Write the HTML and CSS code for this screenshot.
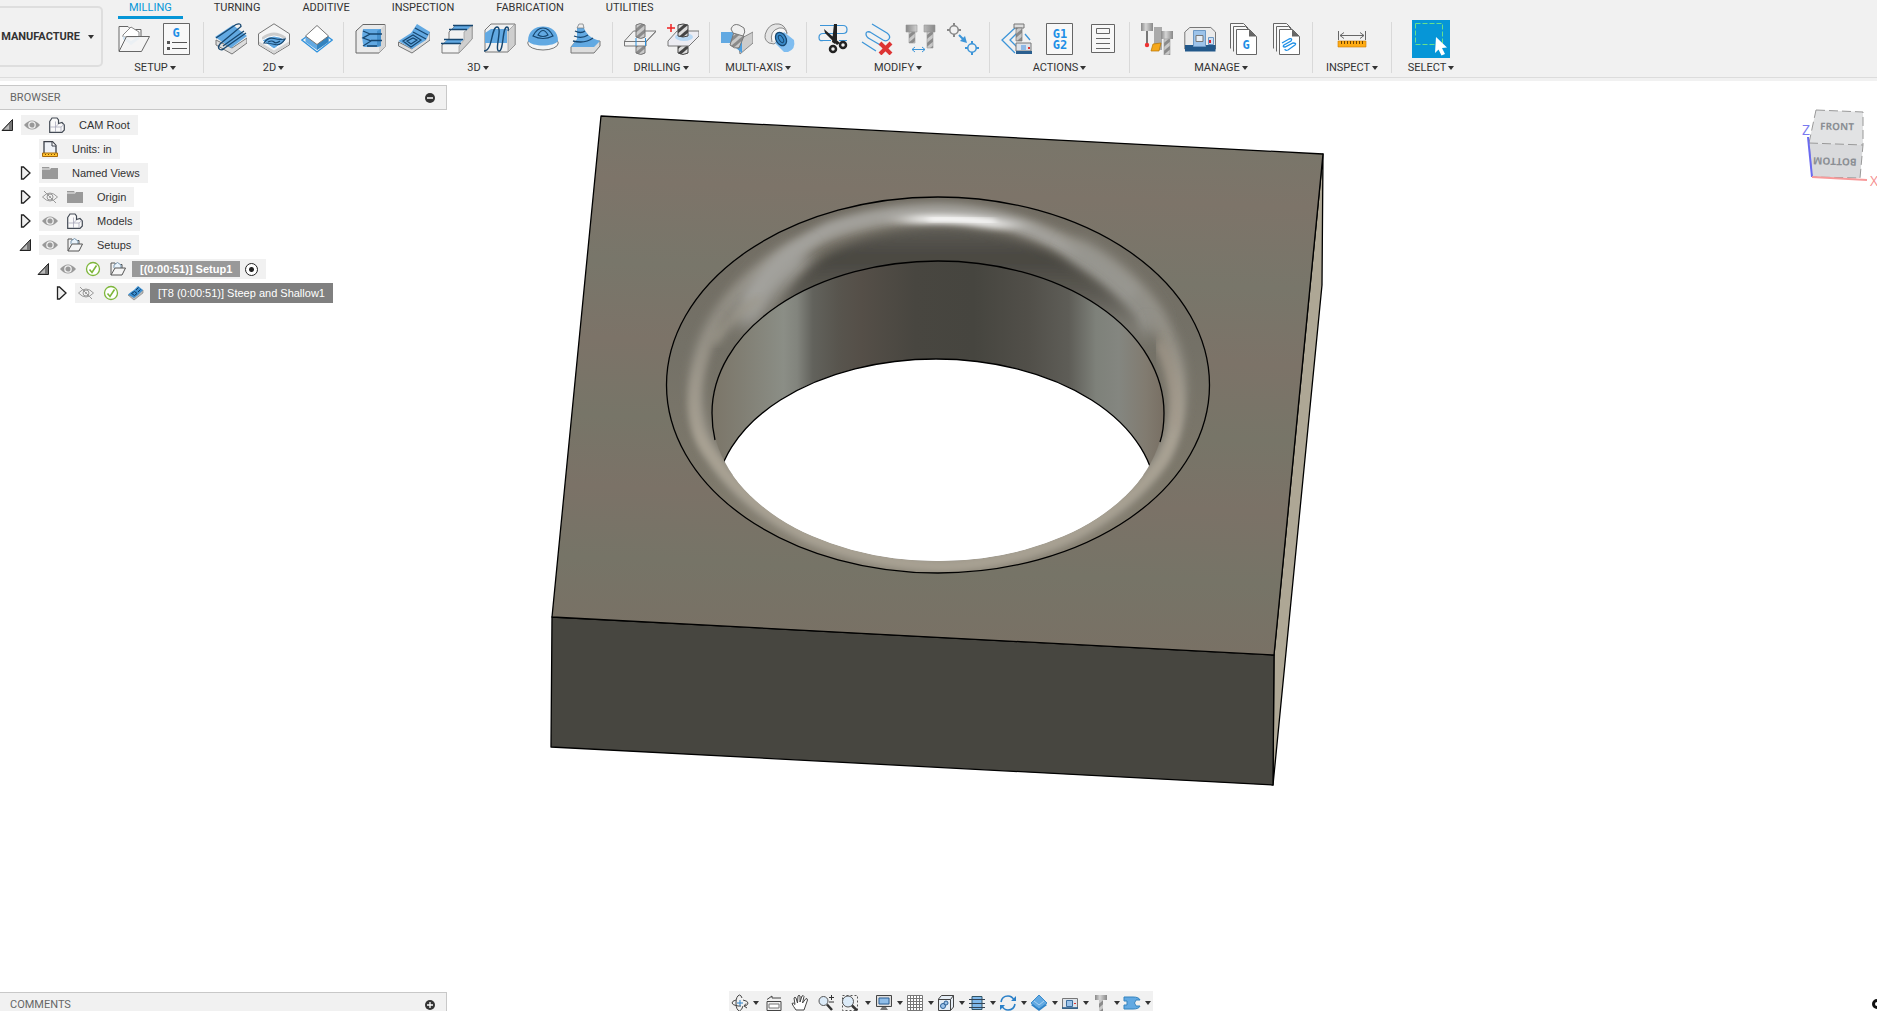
FILE: index.html
```html
<!DOCTYPE html>
<html lang="en">
<head>
    <meta charset="UTF-8">
    <meta name="viewport" content="width=device-width, initial-scale=1.0">
    <title>Manufacture</title>
    <link rel="stylesheet" href="styles.css">
</head>
<body>
    <!-- shared icons -->
    <svg class="defs" aria-hidden="true">
        <symbol id="eye" viewBox="0 0 16 16">
            <path d="M0 8Q8-1 16 8Q8 17 0 8Z" fill="#999"/>
            <circle cx="8" cy="8" r="3.2" fill="none" stroke="#eee" stroke-width="1.3"/>
        </symbol>
        <symbol id="eye-off" viewBox="0 0 16 16">
            <path d="M.5 8Q8 0 15.500 8Q8 16 .5 8ZM2 2l12 12" fill="none" stroke="#999"/>
            <circle cx="8" cy="8" r="3" fill="none" stroke="#999"/>
            <circle cx="8" cy="8" r="1" fill="#999"/>
        </symbol>
        <symbol id="check" viewBox="0 0 16 16">
            <circle cx="8" cy="8" r="6.500" fill="#fff" stroke="#7db63a" stroke-width="1.300"/>
            <path d="M4.500 8.500l2.500 3 4.500-7" fill="none" stroke="#7db63a" stroke-width="1.600"/>
        </symbol>
        <symbol id="body" viewBox="0 0 16 16">
            <path d="M.7 4.500L3 1h5l1.500 2v3.500L13 5.500l2.300 2.500v5L13 15.300H.7Z" fill="#fafafa" stroke="#444b55" stroke-width="1.200"/>
            <path d="M6.500 4.500V15M1 10h5.500l3-3M6.500 10H12v5M12 10l3-2.500" fill="none" stroke="#aab" stroke-width=".8"/>
        </symbol>
        <symbol id="folder" viewBox="0 0 16 16">
            <path d="M0 2h7l1 1.500H0zM0 4.500h8L9 3h7v11H0z" fill="#999"/>
        </symbol>
        <symbol id="folder-open" viewBox="0 0 16 16">
            <path d="M1 14V2h4l1 1.500h6V7" fill="none" stroke="#555"/>
            <path d="M4 7V4l3.500-2.500L11 4v3" fill="#eaf4fc" stroke="#7b98b0"/>
            <path d="M1 14L5 7h10.500l-3.500 7z" fill="#f5f5f5" stroke="#555"/>
        </symbol>
        <symbol id="units" viewBox="0 0 16 16">
            <path d="M2 12V.7h8.500L14 4.500V12" fill="#eef1f6" stroke="#3b3f48" stroke-width="1.300"/>
            <path d="M10 1v4h4" fill="#fff" stroke="#3b3f48"/>
            <path d="M.5 12h15v3.500H.5z" fill="#ffc22e" stroke="#a8690a"/>
            <path d="M3.500 13v1M6.500 13v1M9.500 13v1M12.500 13v1" stroke="#7a4c05"/>
        </symbol>
        <symbol id="toolpath" viewBox="0 0 16 16">
            <path d="M0 10l6 5 9-7V5L6 11z" fill="#bbb" stroke="#777" stroke-width=".6"/>
            <path d="M0 9.500L3 7l3-2 4-4 5 4-5 5-4 3z" fill="#3d8fd0"/>
            <path d="M3.500 8.500l3-2 2.500 2-2.500 2zM8 5l2.500-2.500M10 7l2.500-2.500" fill="none" stroke="#0b3a66"/>
        </symbol>
        <symbol id="tri-open" viewBox="0 0 12 12">
            <path d="M1 11.500L11.500.5v11z" fill="#777" stroke="#222"/>
            <path d="M3 10.500l5-5v5z" fill="#bbb"/>
        </symbol>
        <symbol id="tri-closed" viewBox="0 0 12 14">
            <path d="M1.500 1h2L10 7l-6.500 6h-2z" fill="#eee" stroke="#222" stroke-width="1.300"/>
        </symbol>
        <linearGradient id="steel"><stop stop-color="#888"/><stop offset=".4" stop-color="#d5d5d5"/><stop offset="1" stop-color="#888"/></linearGradient>
        <pattern id="flutes" width="6" height="6" patternUnits="userSpaceOnUse" patternTransform="rotate(-40)">
            <path d="M0 0h6v6H0z" fill="#c9c9c9"/><path d="M0 0h6v3H0z" fill="#8a8a8a"/>
        </pattern>
        <pattern id="flutes-dark" width="6" height="6" patternUnits="userSpaceOnUse" patternTransform="rotate(-40)">
            <path d="M0 0h6v6H0z" fill="#ddd"/><path d="M0 0h6v3H0z" fill="#444"/>
        </pattern>
    </svg>

    <header class="ribbon">
        <button class="workspace">MANUFACTURE<span class="caret"></span></button>
        <div class="ribbon-main">
            <nav class="tabs">
                <button class="tab active">MILLING</button>
                <button class="tab">TURNING</button>
                <button class="tab">ADDITIVE</button>
                <button class="tab">INSPECTION</button>
                <button class="tab">FABRICATION</button>
                <button class="tab">UTILITIES</button>
            </nav>
            <div class="groups">
                <section class="group">
                    <div class="tools">
                        <button class="tool" aria-label="New setup"><svg viewBox="0 0 32 32">
                            <path d="M1 28V3.500h9l3 3h10V13" fill="#f8f8f8" stroke="#666"/>
                            <path d="M5 12l8-8 8 5v5H5z" fill="#fff" stroke="#888"/>
                            <path d="M5 13v3l8 6 8-6v-3l-8 5z" fill="#cfe4f4"/>
                            <path d="M1 28.500L8.500 13.500h23l-8 15z" fill="#f4f4f4" fill-opacity=".75" stroke="#666"/>
                        </svg></button>
                        <button class="tool" aria-label="NC program"><svg viewBox="0 0 32 32">
                            <path d="M2.500.5h26v31h-26z" fill="#f8f8f8" stroke="#666"/>
                            <text x="15" y="14" class="g-text" text-anchor="middle">G</text>
                            <path d="M6 18h3v3H6zM6 24h3v3H6z" fill="#555"/><path d="M11 19.500h15M11 25.500h15" stroke="#555"/>
                        </svg></button>
                    </div>
                    <button class="group-label">SETUP<span class="caret"></span></button>
                </section>
                <section class="group">
                    <div class="tools">
                        <button class="tool" aria-label="2D adaptive"><svg viewBox="0 0 32 32">
                            <path d="M1 17v5l16 9 15-11v-5L17 25z" fill="#ddd" stroke="#777"/>
                            <path d="M0 14L18 2l14 11-16 12z" fill="#62a9e2"/>
                            <path d="M1 15L21 1.500q5-2 5 2L5 21q-3 4 0 5.500 2 1 4-1L31 10" fill="none" stroke="#16466f" stroke-width="1.300"/>
                            <path d="M8 23L29 8" fill="none" stroke="#16466f" stroke-width="1.300"/>
                        </svg></button>
                        <button class="tool" aria-label="2D pocket"><svg viewBox="0 0 32 32">
                            <path d="M16 .8l15.500 10v11L16 31.200.5 21.800v-11z" fill="#f5f5f5" stroke="#777"/>
                            <path d="M4 14Q16 5 28 14v3L16 26 4 16z" fill="#ccc"/>
                            <path d="M4 17.500q12-9 24 0L16 26z" fill="#62a9e2" stroke="#fff"/>
                            <path d="M1 18.500l15 9 15-9v3l-15 9-15-9z" fill="#d5d5d5"/>
                            <path d="M6 20q4-6 10-4.500t11 .5q-4 7-10 5.500t-11-1.500zM10 19q4-2 6 0t6-1" fill="none" stroke="#16466f" stroke-width="1.200"/>
                        </svg></button>
                        <button class="tool" aria-label="2D contour"><svg viewBox="0 0 32 32">
                            <path d="M.8 17L16 6l15.200 11L16 29z" fill="none" stroke="#2b90dd" stroke-width="1.200"/>
                            <path d="M4.500 13v6L16 27l11.500-8v-6z" fill="#62a9e2"/><path d="M16 21v6l11.500-8v-6z" fill="#3383bf"/>
                            <path d="M4.500 13L16 2.500 27.500 13 16 21.500z" fill="#fff" stroke="#777"/>
                        </svg></button>
                    </div>
                    <button class="group-label">2D<span class="caret"></span></button>
                </section>
                <section class="group">
                    <div class="tools">
                        <button class="tool" aria-label="Adaptive clearing"><svg viewBox="0 0 32 32">
                            <path d="M1 8l7-6.500h22v22L24 30H1z" fill="#eaeaea" stroke="#666"/>
                            <path d="M24 8l6-6.500v22L24 30z" fill="#d5d5d5"/>
                            <path d="M8 6h18v17l-5 1H9q-3-9-1-18z" fill="#62a9e2"/><path d="M22 8l4-2v17l-4 1z" fill="#4590cc"/>
                            <path d="M8 8l7 3-7 4 8 3-8 5M27 11H15M27 17.500H16M22 23H12" fill="none" stroke="#16466f" stroke-width="1.300"/>
                        </svg></button>
                        <button class="tool" aria-label="Pocket clearing"><svg viewBox="0 0 32 32">
                            <path d="M.5 19v4L14 30l18-13V9L14 26z" fill="#ddd" stroke="#777"/>
                            <path d="M.5 18L13 10l6-9 13 8-4 8-14 9z" fill="#62a9e2"/>
                            <path d="M5 18l10-6 8 5-10 7zM9 18l6-3 4 2-6 4zM15 9l13 7M17 5l13 7" fill="none" stroke="#16466f" stroke-width="1.200"/>
                        </svg></button>
                        <button class="tool" aria-label="Horizontal"><svg viewBox="0 0 32 32">
                            <path d="M1 22l7-6V9l6-6h17v13L18 30H1z" fill="#f2f2f2" stroke="#777"/>
                            <path d="M18 23l5-6V9l8-6v13L18 30z" fill="#cfcfcf" stroke="#999" stroke-width=".7"/>
                            <path d="M3 20l4-4h16l-4 4zM10 7l4-4h16l-4 4z" fill="#62a9e2"/>
                            <path d="M3 16.500h19M0 20.500h20M12 2.500h20M8 6.500h18" stroke="#16466f" stroke-width="1.300"/>
                        </svg></button>
                        <button class="tool" aria-label="Parallel"><svg viewBox="0 0 32 32">
                            <path d="M1 29V7l6-6h24v21l-7 7z" fill="#f0f0f0" stroke="#777"/>
                            <path d="M1 20V10l6-4h16v14z" fill="#62a9e2"/><path d="M24 8l7-7v21l-7 7z" fill="#cfcfcf" stroke="#888" stroke-width=".6"/>
                            <path d="M0 28c9 0 7-24 13-24s-3 24 2 24 3-24 8-24q2 0 1 4" fill="none" stroke="#16466f" stroke-width="1.400"/>
                        </svg></button>
                        <button class="tool" aria-label="Scallop"><svg viewBox="0 0 32 32">
                            <ellipse cx="16" cy="20" rx="15.300" ry="7" fill="#f5f5f5" stroke="#777"/>
                            <path d="M1 18C1 8 8 3.500 16 3.500S31 8 31 18C27 24 5 24 1 18z" fill="#62a9e2"/>
                            <path d="M6 13q4-8 10-8t10 8q-10 5-20 0zM11 12q5-9 10 0-5 3-10 0z" fill="none" stroke="#16466f" stroke-width="1.200"/>
                        </svg></button>
                        <button class="tool" aria-label="Steep and shallow"><svg viewBox="0 0 32 32">
                            <path d="M1 24l5-6h24v5l-6 7H1z" fill="#ddd" stroke="#777"/>
                            <path d="M1 24l6-8V5l2-4h4q2 13 17 17l-6 6z" fill="#62a9e2"/>
                            <path d="M7 5l2-4h4l1 4z" fill="#eee" stroke="#777" stroke-width=".7"/>
                            <path d="M5 8q6 3 10 0M4 13q8 3 14-1M3 18q12 3 20-3" fill="none" stroke="#16466f" stroke-width="1.300"/>
                        </svg></button>
                    </div>
                    <button class="group-label">3D<span class="caret"></span></button>
                </section>
                <section class="group">
                    <div class="tools">
                        <button class="tool" aria-label="Drill"><svg viewBox="0 0 32 32">
                            <path d="M12 22h9v8q-4 3-9 0z" fill="url(#flutes)" stroke="#777"/>
                            <path d="M.5 18l9-10H32L22 19v4H.5z" fill="#f2f2f2" stroke="#777"/><path d="M.5 18.500H22l10-10" fill="none" stroke="#777"/>
                            <path d="M12 2q4-3 9 0v12q-4 3-9 0z" fill="url(#flutes)" stroke="#777"/><path d="M12 15v8M21.500 15v8" stroke="#2b90dd"/>
                        </svg></button>
                        <button class="tool" aria-label="Hole recognition"><svg viewBox="0 0 32 32">
                            <path d="M11 22h10v8q-5 3-10 0z" fill="url(#flutes-dark)" stroke="#444"/>
                            <path d="M1 18L10 8h22v5L22 23H1z" fill="#ececf2" stroke="#777"/><ellipse cx="17" cy="14" rx="9" ry="4" fill="#b8d8f4"/>
                            <path d="M11 2q5-2 10 0v11q-5 2-10 0z" fill="url(#flutes-dark)" stroke="#444"/>
                            <path d="M4 1v8M0 5h8" stroke="#e22" stroke-width="1.500"/>
                        </svg></button>
                    </div>
                    <button class="group-label">DRILLING<span class="caret"></span></button>
                </section>
                <section class="group">
                    <div class="tools">
                        <button class="tool" aria-label="Swarf"><svg viewBox="0 0 32 32">
                            <path d="M0 9h12v11H0z" fill="#62a9e2"/><path d="M17 17l15-8v11L19 31z" fill="#ccc" stroke="#888"/><path d="M12 20l9-3v13l-6-5z" fill="#4a9ee0"/>
                            <path d="M13 9l10 4-5 12q-5 1-9-3z" fill="url(#flutes)" stroke="#777"/>
                            <path d="M10 6q2-6 8-4l5 3q2 4-1 8l-10-3z" fill="#f0f0f0" stroke="#777"/>
                        </svg></button>
                        <button class="tool" aria-label="Flow"><svg viewBox="0 0 32 32">
                            <path d="M5 20Q-2 16 3 7 7 0 15 1q6 1 8 9L10 21z" fill="#e4e4e4" stroke="#888"/><path d="M8 19Q5 8 15 5q7-1 8 6" fill="#f8f8f8" stroke="#888"/>
                            <path d="M11 20l9-11 10 8q2 9-6 12h-4z" fill="#7fbdf0"/>
                            <ellipse cx="17" cy="16" rx="5" ry="7" transform="rotate(-30 17 16)" fill="#3a8ccc" stroke="#16466f" stroke-width="1.300"/>
                            <ellipse cx="17" cy="16" rx="2" ry="4" transform="rotate(-30 17 16)" fill="none" stroke="#16466f"/>
                        </svg></button>
                    </div>
                    <button class="group-label">MULTI-AXIS<span class="caret"></span></button>
                </section>
                <section class="group">
                    <div class="tools">
                        <button class="tool" aria-label="Trim"><svg viewBox="0 0 32 32">
                            <path d="M2 2.500h23q4 0 4 4t-4 4H5q-4 0-4 4t4 3h8M21 17.500h8" fill="none" stroke="#3d95d8" stroke-width="1.200"/>
                            <path d="M16 1h3v16l-2 4-3-2zM6 6l16 14-3 2L7 10z" fill="#222"/>
                            <circle cx="15" cy="26" r="3" fill="none" stroke="#222" stroke-width="2.500"/><circle cx="25" cy="22" r="3" fill="none" stroke="#222" stroke-width="2.500"/>
                        </svg></button>
                        <button class="tool" aria-label="Delete passes"><svg viewBox="0 0 32 32">
                            <path d="M11 1l15 9q4 3 2 6t-6 1L9 9Q5 8 5 11t4 5l12 7M1 19l14 9" fill="none" stroke="#3d95d8" stroke-width="1.300"/>
                            <path d="M19 20l11 11M30 20L19 31" stroke="#dd3434" stroke-width="4"/>
                        </svg></button>
                        <button class="tool" aria-label="Replace tool"><svg viewBox="0 0 32 32">
                            <path d="M2 2h11v7H2zM20 2h11v7H20z" fill="url(#steel)" stroke="#999" stroke-width=".6"/>
                            <path d="M5 9h6v11H5zM23 9h6v16h-6z" fill="url(#flutes)" stroke="#999" stroke-width=".6"/>
                            <path d="M8 26.500h13M11 24l-3 2.500 3 2.500M18 24l3 2.500-3 2.500" fill="none" stroke="#3d95d8"/>
                        </svg></button>
                        <button class="tool" aria-label="Move entry"><svg viewBox="0 0 32 32">
                            <path d="M7 0v3M7 11v3M0 7h3M11 7h3" stroke="#888" stroke-width="2"/><circle cx="7" cy="7" r="4.200" fill="none" stroke="#888" stroke-width="1.500"/>
                            <path d="M12 12l5 5" stroke="#3d95d8" stroke-width="2"/><path d="M20 20l-7-2 5-5z" fill="#3d95d8"/>
                            <path d="M25 18v3M25 29v3M18 25h3M29 25h3" stroke="#3d95d8" stroke-width="2"/><circle cx="25" cy="25" r="4.200" fill="none" stroke="#3d95d8" stroke-width="1.500"/>
                        </svg></button>
                    </div>
                    <button class="group-label">MODIFY<span class="caret"></span></button>
                </section>
                <section class="group">
                    <div class="tools">
                        <button class="tool" aria-label="Simulate with machine"><svg viewBox="0 0 32 32">
                            <path d="M15 4L1 17l13 13M17 9l-8 8 8 8M24 11l5 6" fill="none" stroke="#3d95d8" stroke-width="1.300"/>
                            <path d="M13 1h10v4H13z" fill="#ddd" stroke="#777"/><path d="M15 5h6v13h-6z" fill="url(#flutes)" stroke="#777" stroke-width=".7"/>
                            <path d="M15 20h15v8H15z" fill="#dde3ea" stroke="#777"/><path d="M15 28h16v3H15z" fill="#2a5f8f"/><path d="M20 22h5v5h-5z" fill="#8fb9e6"/><path d="M27 24h2v2h-2z" fill="#d33"/>
                        </svg></button>
                        <button class="tool" aria-label="Post process"><svg viewBox="0 0 32 32">
                            <path d="M2.500.5h26v31h-26z" fill="#f8f8f8" stroke="#666"/>
                            <text x="16" y="15" class="g-text" text-anchor="middle">G1</text><text x="16" y="26" class="g-text" text-anchor="middle">G2</text>
                        </svg></button>
                        <button class="tool" aria-label="Setup sheet"><svg viewBox="0 0 32 32">
                            <path d="M4.500 1.500h23v28h-23z" fill="#f8f8f8" stroke="#666"/><path d="M9.500 5.500h13v5h-13zM9 15.500h14M9 20.500h14M9 25.500h14" fill="none" stroke="#666"/>
                        </svg></button>
                    </div>
                    <button class="group-label">ACTIONS<span class="caret"></span></button>
                </section>
                <section class="group">
                    <div class="tools">
                        <button class="tool" aria-label="Tool library"><svg viewBox="0 0 32 32">
                            <path d="M0 0h12v8H0z" fill="url(#steel)"/><path d="M6 8v12" stroke="#777" stroke-width="2"/><circle cx="6" cy="22" r="2.200" fill="#e33"/>
                            <path d="M13 4h8v23h-8z" fill="#aaa"/><path d="M12 21l8-1-2 8h-8z" fill="#f5a81c" stroke="#b87400" stroke-width=".7"/>
                            <path d="M20 8h12v8H20z" fill="url(#steel)"/><path d="M23 16h6v16h-6z" fill="url(#flutes)" stroke="#999" stroke-width=".6"/>
                        </svg></button>
                        <button class="tool" aria-label="Machine library"><svg viewBox="0 0 32 32">
                            <path d="M.8 26V9l5-4.500h21l4.700 4.500v17z" fill="#ebebeb" stroke="#777"/><path d="M1 22h30.500v6.500H1z" fill="#22588a"/>
                            <path d="M9.500 7.500h12v16h-12z" fill="#9cc3ea" stroke="#6c98c4"/><path d="M12 12.500h7v6h-7z" fill="#e6eef6" stroke="#777"/>
                            <path d="M24.500 14.500h5v7h-5z" fill="#cfe0f2" stroke="#6c98c4"/><path d="M25 17h2v3h-2z" fill="#d23"/>
                        </svg></button>
                        <button class="tool" aria-label="Post library"><svg viewBox="0 0 32 32">
                            <path d="M3.500 25.500V.5h13l5 5M6.500 28.500v-25h12l4 4" fill="#f8f8f8" stroke="#666"/>
                            <path d="M9.500 31.500v-25h13l7 7v18z" fill="#fff" stroke="#666"/><path d="M22 6.500l7.500 7H22z" fill="#666"/>
                            <text x="19" y="26" class="g-text" text-anchor="middle">G</text>
                        </svg></button>
                        <button class="tool" aria-label="Template library"><svg viewBox="0 0 32 32">
                            <path d="M3.500 25.500V.5h13l5 5M6.500 28.500v-25h12l4 4" fill="#f8f8f8" stroke="#666"/>
                            <path d="M9.500 31.500v-25h13l7 7v18z" fill="#fff" stroke="#666"/><path d="M22 6.500l7.500 7H22z" fill="#666"/>
                            <path d="M12 20l7-4q4-1 2 2l-7 4q-2 2 1 2l8-4q4 0 2 2l-7 5q-3 1-3-1" fill="none" stroke="#1e8fe6" stroke-width="1.300"/>
                        </svg></button>
                    </div>
                    <button class="group-label">MANAGE<span class="caret"></span></button>
                </section>
                <section class="group">
                    <div class="tools">
                        <button class="tool" aria-label="Measure"><svg viewBox="0 0 32 32">
                            <path d="M2.500 8v9M29.500 8v9M4 12.500h24M8 9.500l-4 3 4 3M24 9.500l4 3-4 3" fill="none" stroke="#666"/>
                            <path d="M2 18h28v6H2z" fill="#ffac14" stroke="#c97b00" stroke-width=".6"/><path d="M5.500 18v3M8.500 18v3M11.500 18v3M14.500 18v3M17.500 18v3M20.500 18v3M23.500 18v3M26.500 18v3" stroke="#704500"/>
                        </svg></button>
                    </div>
                    <button class="group-label">INSPECT<span class="caret"></span></button>
                </section>
                <section class="group">
                    <div class="tools">
                        <button class="tool selected" aria-label="Select"><svg viewBox="0 0 38 38">
                            <path d="M3.500 3.500h27v21h-27z" fill="none" stroke="#67e08c" stroke-dasharray="5 2"/>
                            <path d="M24 17l11 10.500-5 .5 3 6-3.500 1.500-3-6-3.500 3.500z" fill="#fff"/>
                        </svg></button>
                    </div>
                    <button class="group-label">SELECT<span class="caret"></span></button>
                </section>
            </div>
        </div>
    </header>

    <main class="viewport">
        <svg class="scene" viewBox="0 81 1877 930" preserveAspectRatio="xMidYMin meet" role="img" aria-label="Plate with filleted through hole">
            <defs>
                <linearGradient id="top-face" gradientUnits="userSpaceOnUse" x1="900" y1="130" x2="880" y2="640">
                    <stop stop-color="#79766a"/><stop offset=".12" stop-color="#7d7469"/><stop offset=".28" stop-color="#78766a"/>
                    <stop offset=".43" stop-color="#7c7368"/><stop offset=".58" stop-color="#777568"/><stop offset=".72" stop-color="#7b7267"/>
                    <stop offset=".86" stop-color="#767467"/><stop offset="1" stop-color="#797165"/>
                </linearGradient>
                <linearGradient id="wall" gradientUnits="userSpaceOnUse" x1="711" y1="0" x2="1164" y2="0">
                    <stop stop-color="#7b7568"/><stop offset=".07" stop-color="#817f74"/><stop offset=".16" stop-color="#8b8e86"/>
                    <stop offset=".19" stop-color="#82847d"/><stop offset=".225" stop-color="#62625c"/><stop offset=".28" stop-color="#58554e"/>
                    <stop offset=".33" stop-color="#554f48"/><stop offset=".45" stop-color="#484640"/><stop offset=".58" stop-color="#46453f"/>
                    <stop offset=".7" stop-color="#514f49"/><stop offset=".79" stop-color="#5e5d57"/><stop offset=".85" stop-color="#7e817a"/>
                    <stop offset=".9" stop-color="#848680"/><stop offset=".96" stop-color="#817b70"/><stop offset="1" stop-color="#786f63"/>
                </linearGradient>
                <linearGradient id="bevel" gradientUnits="userSpaceOnUse" x1="0" y1="197" x2="0" y2="573">
                    <stop stop-color="#716c62"/><stop offset=".4" stop-color="#747167"/><stop offset=".75" stop-color="#7d786b"/><stop offset="1" stop-color="#8a8374"/>
                </linearGradient>
                <linearGradient id="shade" gradientUnits="userSpaceOnUse" x1="0" y1="222" x2="0" y2="325">
                    <stop stop-color="#605e58"/><stop offset=".35" stop-color="#484640"/><stop offset=".7" stop-color="#5c5a53"/><stop offset="1" stop-color="#7a7870"/>
                </linearGradient>
                <!-- lower rim light, fades out towards the back of the hole -->
                <linearGradient id="rim-light" gradientUnits="userSpaceOnUse" x1="0" y1="310" x2="0" y2="440">
                    <stop stop-color="#a8a193" stop-opacity="0"/><stop offset="1" stop-color="#a8a193"/>
                </linearGradient>
                <filter id="blur3" x="-20%" y="-20%" width="140%" height="140%"><feGaussianBlur stdDeviation="3"/></filter>
                <filter id="blur5" x="-20%" y="-20%" width="140%" height="140%"><feGaussianBlur stdDeviation="5"/></filter>
                <filter id="blur9" x="-60%" y="-60%" width="220%" height="220%"><feGaussianBlur stdDeviation="9"/></filter>
                <filter id="blur-glint" x="-50%" y="-200%" width="200%" height="500%"><feGaussianBlur stdDeviation="14 3"/></filter>
                <clipPath id="rim"><ellipse cx="938" cy="385" rx="271" ry="188"/></clipPath>
                <clipPath id="inner"><path d="M712 413A226 152 0 0 1 1164 413A226 148 0 0 1 712 413Z"/></clipPath>
            </defs>

            <!-- plate -->
            <g stroke="#000" stroke-width="1.300" stroke-linejoin="round">
                <path d="M1323 154L1322 285 1273 785 1274 655Z" fill="#aea795"/>
                <path d="M552 617L1274 655 1273 785 551 747Z" fill="#474640"/>
                <path d="M601 116L1323 154 1274 655 552 617Z" fill="url(#top-face)"/>
            </g>

            <!-- fillet -->
            <g clip-path="url(#rim)" fill="none" stroke-linecap="round">
                <ellipse cx="938" cy="385" rx="272" ry="188" fill="url(#bevel)"/>
                <ellipse cx="938" cy="389" rx="242" ry="174" stroke="#918d83" stroke-width="14" filter="url(#blur5)"/>
                <path d="M752 298Q778 254 830 229 880 212 938 211 990 212 1035 232 1090 258 1128 292" stroke="#a4a39e" stroke-width="14" filter="url(#blur5)"/>
                <path d="M748 314Q762 284 796 260" stroke="#a3a29d" stroke-width="26" filter="url(#blur9)"/>
                <path d="M1080 256Q1122 280 1146 322" stroke="#95948e" stroke-width="26" filter="url(#blur9)"/>
                <path d="M778 312Q800 268 836 250 880 230 938 228 1000 229 1050 252 1100 278 1136 318L1140 345 1040 300 938 285 840 300 760 340Z" fill="url(#shade)" filter="url(#blur5)"/>
                <path d="M716 340Q734 312 758 300" stroke="#9b978b" stroke-width="7" filter="url(#blur5)"/>
                <path d="M720 320Q692 370 694 405 695 435 712 456 745 505 812 538 875 564 942 566 1010 564 1072 535 1135 502 1164 458 1184 420 1176 375 1168 340 1146 312" stroke="url(#rim-light)" stroke-width="12" filter="url(#blur3)"/>
                <path d="M1160 345Q1177 385 1176 425" stroke="#a2988a" stroke-width="8" filter="url(#blur5)"/>
                <path d="M910 220Q958 216 1006 226" stroke="#fff" stroke-width="8" filter="url(#blur-glint)"/>
                <path d="M930 219Q962 217 994 222" stroke="#fff" stroke-width="4" filter="url(#blur3)"/>
            </g>

            <!-- bore -->
            <g clip-path="url(#inner)">
                <path d="M711 255h454v312H711z" fill="url(#wall)"/>
                <ellipse cx="936" cy="499" rx="220" ry="140" fill="#fff" stroke="#000" stroke-width="1.300"/>
                <path d="M724 475h425v95H724z" fill="#fff"/>
            </g>
            <g fill="none" stroke="#000" stroke-width="1.300">
                <ellipse cx="938" cy="385" rx="271.500" ry="188"/>
                <path d="M715 440Q712 427 712 413A226 152 0 0 1 1164 413Q1164 430 1160 442"/>
            </g>
        </svg>

        <svg class="viewcube" viewBox="0 0 74 90" role="img" aria-label="View cube">
            <path d="M12 9L59 11 59 44 5 42Z" fill="#e2e3e4"/><path d="M5 42L59 44 56 77 8 76Z" fill="#d9dadc"/>
            <path d="M12 9L59 11 59 44 56 77 8 76 5 42ZM5 42L59 44" fill="none" stroke="#999" stroke-dasharray="9 4"/>
            <path d="M4 36L8 76" stroke="#6a6af0" stroke-width="2"/><path d="M8 76L63 79" stroke="#f79a9a" stroke-width="2"/>
            <text x="33" y="29" class="cube-face" text-anchor="middle" transform="rotate(1 33 29)">FRONT</text>
            <text x="31" y="57" class="cube-face" text-anchor="middle" transform="rotate(182 31 57)">BOTTOM</text>
            <text x="-2" y="34" class="axis axis-z">Z</text>
            <text x="66" y="85" class="axis axis-x">X</text>
        </svg>

        <aside class="browser">
            <div class="panel-head">
                <span>BROWSER</span>
                <button class="toggle" aria-label="Collapse browser"><svg viewBox="0 0 10 10"><circle cx="5" cy="5" r="5" fill="#333"/><path d="M2 5h6" stroke="#fff" stroke-width="1.500"/></svg></button>
            </div>
            <ul class="tree">
                <li class="row">
                    <button class="twist open" aria-label="Collapse"><svg><use href="#tri-open"/></svg></button>
                    <div class="node"><svg><use href="#eye"/></svg><svg><use href="#body"/></svg><span class="name">CAM Root</span></div>
                </li>
                <li class="row level-1">
                    <span class="twist"></span>
                    <div class="node"><svg><use href="#units"/></svg><span class="name">Units: in</span></div>
                </li>
                <li class="row level-1">
                    <button class="twist" aria-label="Expand"><svg><use href="#tri-closed"/></svg></button>
                    <div class="node"><svg><use href="#folder"/></svg><span class="name">Named Views</span></div>
                </li>
                <li class="row level-1">
                    <button class="twist" aria-label="Expand"><svg><use href="#tri-closed"/></svg></button>
                    <div class="node"><svg><use href="#eye-off"/></svg><svg><use href="#folder"/></svg><span class="name">Origin</span></div>
                </li>
                <li class="row level-1">
                    <button class="twist" aria-label="Expand"><svg><use href="#tri-closed"/></svg></button>
                    <div class="node"><svg><use href="#eye"/></svg><svg><use href="#body"/></svg><span class="name">Models</span></div>
                </li>
                <li class="row level-1">
                    <button class="twist open" aria-label="Collapse"><svg><use href="#tri-open"/></svg></button>
                    <div class="node"><svg><use href="#eye"/></svg><svg><use href="#folder-open"/></svg><span class="name">Setups</span></div>
                </li>
                <li class="row level-2">
                    <button class="twist open" aria-label="Collapse"><svg><use href="#tri-open"/></svg></button>
                    <div class="node">
                        <svg><use href="#eye"/></svg><svg><use href="#check"/></svg><svg><use href="#folder-open"/></svg>
                        <label class="name active-setup" for="setup1">[(0:00:51)] Setup1</label>
                        <input type="radio" class="radio" id="setup1" name="setup" checked>
                    </div>
                </li>
                <li class="row level-3">
                    <button class="twist" aria-label="Expand"><svg><use href="#tri-closed"/></svg></button>
                    <div class="node">
                        <svg><use href="#eye-off"/></svg><svg><use href="#check"/></svg><svg><use href="#toolpath"/></svg>
                        <span class="name picked">[T8 (0:00:51)] Steep and Shallow1</span>
                    </div>
                </li>
            </ul>
        </aside>

        <div class="comments panel-head">
            <span>COMMENTS</span>
            <button class="toggle" aria-label="Expand comments"><svg viewBox="0 0 10 10"><circle cx="5" cy="5" r="5" fill="#333"/><path d="M2 5h6M5 2v6" stroke="#fff" stroke-width="1.300"/></svg></button>
        </div>

        <nav class="navbar">
            <button class="nav drop" aria-label="Orbit"><svg viewBox="0 0 18 18"><path d="M11 4Q10 1 8.500 1 5 2 5 9t3.500 8q2.500-1 3.500-5M5 6Q1 7 1 9t6 3h3M12 6q5 1 5 3t-3 3M15 9.500L13 12l3 2" fill="none" stroke="#444"/><path d="M9 6v6M6 9h6" stroke="#2b80c8"/></svg><span class="caret"></span></button>
            <button class="nav" aria-label="Look at"><svg viewBox="0 0 18 18"><path d="M2 7.500h14v9H2zM2 5.500L7 2v2h9" fill="#eee" stroke="#444"/><path d="M4 10h10v4H4z" fill="#fff" stroke="#777"/></svg></button>
            <button class="nav" aria-label="Pan"><svg viewBox="0 0 18 18"><path d="M5 16Q2 12 1 9.500q1-1.500 3 1L3 4q1-1.500 2 0l1.500 5L7 2q1-1.500 2 0v6l2-6q1.500-1 2 .5L11.500 9 15 4.500q1.500 0 1.500 1.500L13 16z" fill="#fff" stroke="#444"/></svg></button>
            <button class="nav" aria-label="Zoom"><svg viewBox="0 0 18 18"><circle cx="6.500" cy="7" r="4.500" fill="#dcebf8" stroke="#555"/><path d="M10 10.500l5 5.500" stroke="#333" stroke-width="2.500"/><path d="M14.500 1v5M12 3.500h5M12 8h5" stroke="#333"/></svg></button>
            <button class="nav drop fit" aria-label="Fit"><svg viewBox="0 0 18 18"><path d="M1.500 1.500h15v15h-15z" fill="none" stroke="#555" stroke-dasharray="2 2"/><circle cx="7" cy="7.500" r="5.500" fill="#dcebf8" stroke="#555"/><path d="M11 11.500l5 5" stroke="#333" stroke-width="2.500"/></svg><span class="caret"></span></button>
            <button class="nav drop" aria-label="Display settings"><svg viewBox="0 0 18 18"><path d="M1.500 1.500h15v11h-15z" fill="#ddd" stroke="#444"/><path d="M4 4h10v6H4z" fill="#8fbde8" stroke="#2a5f95"/><path d="M5 16h8l-2-3H7z" fill="#777"/></svg><span class="caret"></span></button>
            <button class="nav drop" aria-label="Grid"><svg viewBox="0 0 18 18"><path d="M1.500 1.500h15v15h-15zM4.500 1v16M7.500 1v16M10.500 1v16M13.500 1v16M1 4.500h16M1 7.500h16M1 10.500h16M1 13.500h16" fill="#fff" stroke="#777"/></svg><span class="caret"></span></button>
            <button class="nav drop" aria-label="Object visibility"><svg viewBox="0 0 18 18"><path d="M1.500 5l3-3.500h12V13l-3 3.500h-12z" fill="#e6eef6" stroke="#444"/><path d="M1.500 5.500h12v11M13.500 5.500l3-4" fill="none" stroke="#444"/><circle cx="6" cy="12" r="2.500" fill="#9cc3ea" stroke="#2a5f95"/><circle cx="9" cy="9" r="2" fill="#9cc3ea" stroke="#2a5f95"/></svg><span class="caret"></span></button>
            <button class="nav drop" aria-label="Stock"><svg viewBox="0 0 18 18"><path d="M4 2.500h10v13H4z" fill="#7fb8ea" stroke="#356"/><path d="M1 5.500h16M1 9.500h16M1 13.500h16" stroke="#345"/></svg><span class="caret"></span></button>
            <button class="nav drop" aria-label="Refresh"><svg viewBox="0 0 18 18"><path d="M2 8q1-6 7-6 4 0 6 4M16 10q-1 6-7 6-4 0-6-4" fill="none" stroke="#2b80c8" stroke-width="1.600"/><path d="M17 2v5h-5zM1 16v-5h5z" fill="#2b80c8"/></svg><span class="caret"></span></button>
            <button class="nav drop" aria-label="Layers"><svg viewBox="0 0 18 18"><path d="M1 11l8-5 8 5-8 6z" fill="#2b80c8"/><path d="M1 9l8-8 8 8-8 6z" fill="#62a9e2" stroke="#3a8ccc"/><path d="M4 7l5 4 5-4" fill="none" stroke="#a9d2f3"/></svg><span class="caret"></span></button>
            <button class="nav drop" aria-label="Machine"><svg viewBox="0 0 18 18"><path d="M1.500 4.500h15v10h-15z" fill="#dde3ea" stroke="#777"/><path d="M5.500 6.500h6v6h-6z" fill="#9cc3ea" stroke="#3a6ea0"/><path d="M1 14h16" stroke="#22588a" stroke-width="1.500"/><path d="M13 9h2v1h-2z" fill="#d33"/></svg><span class="caret"></span></button>
            <button class="nav drop" aria-label="Tool"><svg viewBox="0 0 18 18"><path d="M3 1h12v5H3z" fill="url(#steel)"/><path d="M7 6h4v11H7z" fill="url(#flutes)"/></svg><span class="caret"></span></button>
            <button class="nav drop" aria-label="Toolpath"><svg viewBox="0 0 18 18"><path d="M1 3h9q6 0 7 3h-4q-3 3 0 6h4q-1 3-7 3H1v-4h3V7H1z" fill="#62a9e2" stroke="#3383bf"/></svg><span class="caret"></span></button>
        </nav>
        <button class="help" aria-label="Help"></button>
    </main>
</body>
</html>
```
FILE: styles.css
```css
* {
    box-sizing: border-box;
}
body {
    margin: 0;
    height: 100vh;
    display: flex;
    flex-direction: column;
    overflow: hidden;
    background: #fff;
    color: #333;
    font-family: Roboto, "Liberation Sans", sans-serif;
    font-size: 11px;
    line-height: 14px;
}
button {
    padding: 0;
    border: none;
    background: none;
    color: inherit;
    font: inherit;
    cursor: pointer;
}
svg {
    display: block;
}
.defs {
    position: absolute;
    width: 0;
    height: 0;
}
.caret {
    display: inline-block;
    flex: none;
    border: 3px solid transparent;
    border-top: 4px solid #333;
    border-bottom: none;
}

/* ribbon */
.ribbon {
    display: flex;
    flex: none;
    height: 81px;
    background: linear-gradient(#dcdcdc, #dcdcdc) 0 77px / 100% 1px no-repeat #f1f1f1;
}
.workspace {
    display: flex;
    align-items: center;
    justify-content: flex-end;
    gap: 8px;
    width: 103px;
    height: 61px;
    margin-top: 6px;
    padding-right: 7px;
    border: 2px solid #dedede;
    border-left: none;
    border-radius: 0 5px 5px 0;
    font-weight: bold;
}
.ribbon-main {
    margin-left: 4px;
}
.tabs {
    display: flex;
    gap: 20px;
    height: 20px;
    padding-left: 11px;
}
.tab {
    height: 19px;
    padding: 0 11px;
    border-bottom: 3px solid transparent;
}
.tab.active {
    color: #0696d7;
    border-color: #0696d7;
}
.groups {
    display: flex;
}
.group {
    display: flex;
    flex-direction: column;
    align-items: center;
    min-width: 79px;
    height: 53px;
    padding: 0 6px 0 5px;
    background: linear-gradient(#d9d9d9, #d9d9d9) right bottom / 1px 51px no-repeat;
}
.group:last-child {
    background: none;
}
.tools {
    display: flex;
}
.tool {
    display: flex;
    align-items: center;
    justify-content: center;
    width: 43px;
    height: 38px;
}
.tool svg {
    width: 32px;
    height: 32px;
}
.tool.selected {
    width: 38px;
    background: #0696d7;
}
.tool.selected svg {
    width: 38px;
    height: 38px;
}
.group-label {
    display: flex;
    align-items: center;
    gap: 2px;
    margin-top: 3px;
}
.g-text {
    font: bold 12px "DejaVu Sans Mono", monospace;
    fill: #1e8fe6;
}

/* viewport */
.viewport {
    position: relative;
    flex: 1;
    display: flex;
    flex-direction: column;
    align-items: flex-start;
    justify-content: space-between;
    padding-top: 4px;
}
.scene {
    position: absolute;
    inset: 0;
    width: 100%;
}
.viewcube {
    position: absolute;
    top: 20px;
    right: -1px;
    width: 74px;
    height: 90px;
    overflow: visible;
}
.cube-face {
    font: bold 10px "Open Sans", sans-serif;
    fill: #8b8f94;
}
.axis {
    font: 14px "Open Sans", sans-serif;
}
.axis-z {
    fill: #7a7af0;
}
.axis-x {
    fill: #f59090;
}

/* browser */
.browser {
    position: relative;
}
.panel-head {
    position: relative;
    display: flex;
    align-items: center;
    justify-content: space-between;
    width: 447px;
    height: 25px;
    padding: 0 11px 0 10px;
    border: 1px solid #c8c8c8;
    border-left: none;
    background: #f1f1f1;
    color: #666;
}
.toggle svg {
    width: 10px;
    height: 10px;
}
.comments {
    height: 19px;
    border-bottom: none;
    padding-top: 5px;
}
.tree {
    display: flex;
    flex-direction: column;
    gap: 4px;
    margin: 5px 0 0;
    padding: 0;
    list-style: none;
    font-family: "Liberation Sans", Arial, sans-serif;
}
.row {
    display: flex;
    height: 20px;
}
.level-1 {
    padding-left: 18px;
}
.level-2 {
    padding-left: 36px;
}
.level-3 {
    padding-left: 54px;
}
.twist {
    flex: none;
    width: 21px;
    padding-left: 2px;
}
.twist.open {
    padding-left: 1px;
}
.twist svg {
    width: 12px;
    height: 14px;
}
.twist.open svg {
    height: 12px;
}
.node {
    display: flex;
    align-items: center;
    padding-left: 3px;
    background: #f1f1f1;
}
.node svg {
    width: 16px;
    height: 16px;
}
.node svg + svg {
    margin-left: 9px;
}
.name {
    margin-left: 6px;
    padding: 0 8px;
    white-space: nowrap;
}
.active-setup {
    background: #999;
    color: #fff;
    font-weight: bold;
    line-height: 16px;
}
.picked {
    background: #808080;
    color: #fff;
    line-height: 20px;
}
.radio {
    appearance: none;
    width: 13px;
    height: 13px;
    margin: 0 8px 0 5px;
    border: 1px solid #222;
    border-radius: 50%;
    background: radial-gradient(circle, #222 2px, #fff 3px);
}

/* navigation bar */
.navbar {
    position: absolute;
    left: 50%;
    bottom: 0;
    transform: translateX(-50%);
    margin-left: 2px;
    display: flex;
    height: 20px;
    padding: 3px 0 0 1px;
    background: #f1f1f1;
}
.nav {
    display: flex;
    align-items: center;
    justify-content: center;
    gap: 4px;
    width: 26px;
}
.nav.drop {
    width: 31px;
}
.nav.fit {
    width: 35px;
    gap: 6px;
}
.nav svg {
    width: 18px;
    height: 18px;
}
.help {
    position: absolute;
    right: -5px;
    bottom: 2px;
    width: 10px;
    height: 10px;
    border: 3px solid #111;
    border-radius: 50%;
}
```
